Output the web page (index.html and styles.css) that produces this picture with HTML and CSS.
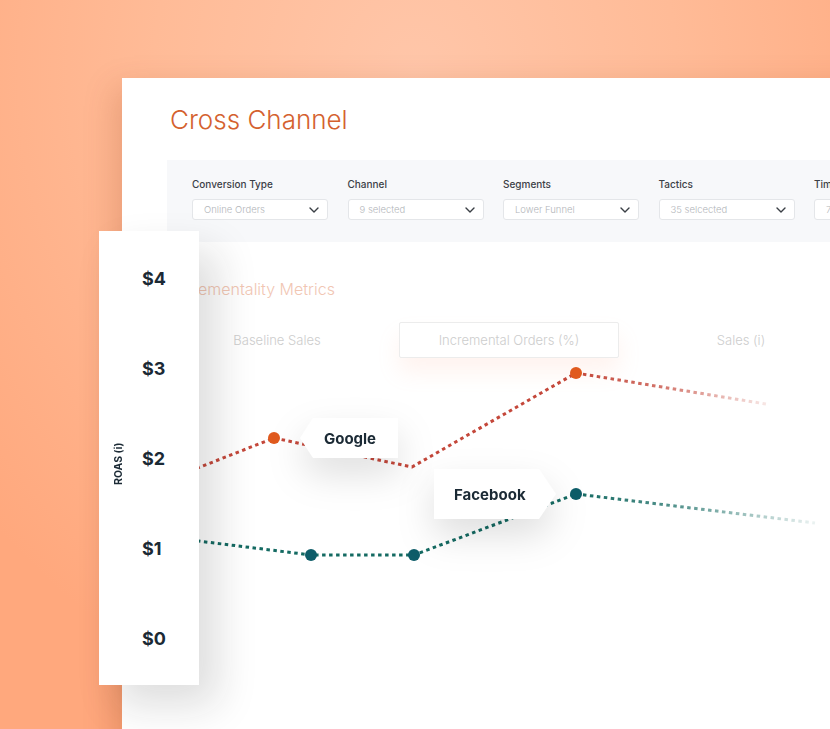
FILE: index.html
```html
<!DOCTYPE html>
<html>
<head>
<meta charset="utf-8">
<link rel="stylesheet" href="styles.css">
</head>
<body>
<div class="page">
  <div class="panel">
    <h1 class="title">Cross Channel</h1>
    <div class="filters">
      <div class="filter">
        <div class="flabel">Conversion Type</div>
        <div class="select"><span>Online Orders</span><svg class="chev" viewBox="0 0 10 6"><polyline points="1,1 5,5 9,1"/></svg></div>
      </div>
      <div class="filter">
        <div class="flabel">Channel</div>
        <div class="select"><span>9 selected</span><svg class="chev" viewBox="0 0 10 6"><polyline points="1,1 5,5 9,1"/></svg></div>
      </div>
      <div class="filter">
        <div class="flabel">Segments</div>
        <div class="select"><span>Lower Funnel</span><svg class="chev" viewBox="0 0 10 6"><polyline points="1,1 5,5 9,1"/></svg></div>
      </div>
      <div class="filter">
        <div class="flabel">Tactics</div>
        <div class="select"><span>35 selcected</span><svg class="chev" viewBox="0 0 10 6"><polyline points="1,1 5,5 9,1"/></svg></div>
      </div>
      <div class="filter">
        <div class="flabel">Timeframe</div>
        <div class="select"><span>7 Days</span><svg class="chev" viewBox="0 0 10 6"><polyline points="1,1 5,5 9,1"/></svg></div>
      </div>
    </div>
    <h2 class="metrics">Incrementality Metrics</h2>
    <div class="tabs">
      <div class="tab">Baseline Sales</div>
      <div class="tab active">Incremental Orders (%)</div>
      <div class="tab">Sales (i)</div>
    </div>
  </div>

  <svg class="chart" viewBox="0 0 830 729" width="830" height="729">
    <defs>
      <linearGradient id="fadeO" gradientUnits="userSpaceOnUse" x1="576" y1="0" x2="768" y2="0">
        <stop offset="0" stop-color="#c4473a" stop-opacity="1"/>
        <stop offset="0.45" stop-color="#c4473a" stop-opacity="0.75"/>
        <stop offset="1" stop-color="#c4473a" stop-opacity="0.12"/>
      </linearGradient>
      <linearGradient id="fadeT" gradientUnits="userSpaceOnUse" x1="576" y1="0" x2="816" y2="0">
        <stop offset="0" stop-color="#146a62" stop-opacity="1"/>
        <stop offset="0.45" stop-color="#146a62" stop-opacity="0.7"/>
        <stop offset="1" stop-color="#146a62" stop-opacity="0.08"/>
      </linearGradient>
    </defs>
    <polyline class="ln lo" points="190,471 274,438 412,467 576,373"/>
    <polyline class="ln" stroke="url(#fadeO)" points="576,373 766,404"/>
    <polyline class="ln lt" points="190,540 311,555 414,555 576,494"/>
    <polyline class="ln" stroke="url(#fadeT)" points="576,494 815,523"/>
    <circle class="dot do" cx="274" cy="438" r="6"/>
    <circle class="dot do" cx="576" cy="373" r="6"/>
    <circle class="dot dt" cx="311" cy="555" r="6"/>
    <circle class="dot dt" cx="414" cy="555" r="6"/>
    <circle class="dot dt" cx="576" cy="494" r="6"/>
  </svg>

  <div class="tagwrap tag-google"><div class="tag">Google</div></div>
  <div class="tagwrap tag-facebook"><div class="tag">Facebook</div></div>

  <div class="axis">
    <div class="axis-label">ROAS (i)</div>
    <div class="axis-values">
      <div class="val">$4</div>
      <div class="val">$3</div>
      <div class="val">$2</div>
      <div class="val">$1</div>
      <div class="val">$0</div>
    </div>
  </div>
</div>
</body>
</html>
```

FILE: styles.css
```css
* { box-sizing: border-box; }
html, body { margin: 0; padding: 0; }
body { font-family: Inter, "Liberation Sans", sans-serif; }

.page {
  position: relative;
  width: 830px;
  height: 729px;
  overflow: hidden;
  padding: 78px 0 0 122px;
  background:
    radial-gradient(ellipse 70% 90% at 50% 10%, #ffc6a9 0%, #ffbb97 45%, rgba(255,170,126,0) 100%),
    #ffa87d;
}

.panel {
  width: 760px;
  height: 700px;
  background: #ffffff;
  padding: 24px 0 0 48px;
  box-shadow: -6px 10px 30px rgba(150, 60, 20, 0.22);
}

.title {
  margin: 0;
  font-family: Inter, sans-serif;
  font-weight: 300;
  font-size: 26px;
  line-height: 36px;
  color: #d4612f;
  letter-spacing: 0;
}

.filters {
  margin: 22px 0 0 -3px;
  height: 82px;
  background: #f7f8fa;
  padding: 17px 25px 0 25px;
  display: flex;
  gap: 19.5px;
  width: 720px;
}

.filter { width: 136px; flex: none; display: flex; flex-direction: column; gap: 8px; }

.flabel {
  font-size: 10px;
  line-height: 14px;
  font-weight: 500;
  color: #3b4046;
}

.select {
  height: 21px;
  background: #fff;
  border: 1px solid #e4e6e9;
  border-radius: 3px;
  display: flex;
  align-items: center;
  justify-content: space-between;
  padding: 0 8px 0 11px;
  font-size: 9.5px;
  font-weight: 300;
  color: #b3b6ba;
}

.chev { width: 10px; height: 6px; }
.chev polyline { fill: none; stroke: #3a3f45; stroke-width: 1.4; stroke-linecap: round; stroke-linejoin: round; }

.metrics {
  margin: 36px 0 0 0;
  font-size: 16px;
  line-height: 22px;
  font-weight: 300;
  color: #f1c6b3;
}

.tabs {
  margin: 22px 0 0 -9px;
  display: grid;
  grid-template-columns: 232px 232px 232px;
  height: 36px;
}

.tab {
  display: flex;
  align-items: center;
  justify-content: center;
  font-size: 13px;
  font-weight: 300;
  color: #cdcdcd;
}

.tab.active {
  margin: 0 6px;
  border: 1px solid #ececec;
  border-radius: 2px;
  box-shadow: 0 14px 22px rgba(255, 170, 140, 0.14);
}

.chart {
  position: absolute;
  left: 0;
  top: 0;
}

.ln {
  fill: none;
  stroke-width: 3;
  stroke-dasharray: 3.5 3.5;
  stroke-linejoin: round;
}
.lo { stroke: #c4473a; }
.lt { stroke: #146a62; }
.dot.do { fill: #e05a1e; }
.dot.dt { fill: #0e5d69; }

.tagwrap {
  position: absolute;
  filter: drop-shadow(0 16px 18px rgba(0, 0, 0, 0.13));
}

.tag {
  width: 100%;
  height: 100%;
  background: #fff;
  display: flex;
  align-items: center;
  font-weight: 700;
  font-size: 15px;
  color: #1b2a35;
}

.tag-google { left: 300px; top: 418px; width: 98px; height: 40px; }
.tag-google .tag {
  justify-content: center;
  padding-left: 2px;
  clip-path: polygon(0 50%, 13px 0, 100% 0, 100% 100%, 13px 100%);
}

.tag-facebook { left: 434px; top: 469px; width: 122px; height: 50px; }
.tag-facebook .tag {
  padding-left: 20px;
  clip-path: polygon(0 0, calc(100% - 17px) 0, 100% 50%, calc(100% - 17px) 100%, 0 100%);
}

.axis {
  position: absolute;
  left: 99px;
  top: 231px;
  width: 100px;
  height: 454px;
  background: #fff;
  display: flex;
  box-shadow: 18px 20px 40px rgba(30, 30, 30, 0.15);
}

.axis-label {
  width: 38px;
  flex: none;
  display: flex;
  align-items: center;
  justify-content: center;
  writing-mode: vertical-rl;
  transform: rotate(180deg);
  font-size: 10.5px;
  font-weight: 700;
  color: #1b2a35;
  padding-bottom: 12px;
}

.axis-values {
  padding: 2px 0 2px 5px;
  display: flex;
  flex-direction: column;
}

.val {
  height: 90px;
  display: flex;
  align-items: center;
  font-weight: 700;
  font-size: 18px;
  color: #1b2a35;
}
```
